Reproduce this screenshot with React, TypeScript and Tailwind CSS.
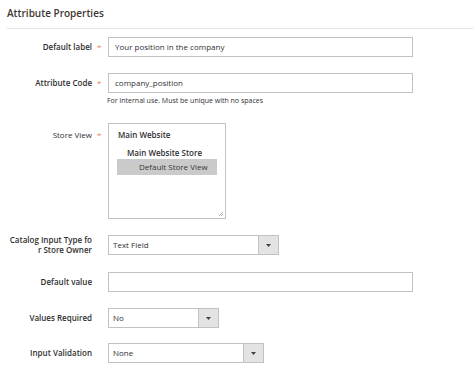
import React from "react";

const font = { fontFamily: '"Open Sans", "Liberation Sans", sans-serif' };

function Label({ text, required }: { text: React.ReactNode; required?: boolean }) {
  return (
    <>
      <div className="w-[85px] shrink-0 text-right text-[8px] font-semibold leading-[10px] text-[#303030]">
        {text}
      </div>
      <div className="w-[16px] shrink-0 pl-[5px] text-[8px] leading-[10px] text-[#e8805a]">
        {required ? "*" : ""}
      </div>
    </>
  );
}

function Select({ value, width }: { value: string; width: string }) {
  return (
    <div className={`flex h-[20px] ${width} border border-[#c2c2c2] bg-white`}>
      <div className="flex flex-1 items-center pl-[4px] text-[8px] text-[#303030]">{value}</div>
      <div className="flex w-[20px] items-center justify-center border-l border-[#c2c2c2] bg-[#e3e3e3]">
        <svg width="5" height="3" viewBox="0 0 5 3">
          <path d="M0 0h5L2.5 3z" fill="#414141" />
        </svg>
      </div>
    </div>
  );
}

export default function App() {
  return (
    <div className="h-[374px] w-[474px] bg-white pl-[7px] pr-[1px]" style={font}>
      <div className="pt-[6px] text-[10px] font-semibold leading-[15px] text-[#41362f]">
        Attribute Properties
      </div>
      <div className="mt-[7px] border-b border-[#e3e3e3]" />

      <div className="mt-[8px] flex items-center">
        <Label text="Default label" required />
        <div className="flex h-[20px] w-[305px] items-center border border-[#c2c2c2] pl-[6px] text-[8px] text-[#303030]">
          Your position in the company
        </div>
      </div>

      <div className="mt-[16px] flex items-center">
        <Label text="Attribute Code" required />
        <div className="flex h-[20px] w-[305px] items-center border border-[#c2c2c2] pl-[6px] text-[8px] text-[#303030]">
          company_position
        </div>
      </div>
      <div className="ml-[100px] mt-[3px] text-[7px] leading-[10px] text-[#303030]">
        For internal use. Must be unique with no spaces
      </div>

      <div className="mt-[17px] flex items-start">
        <div className="flex pt-[7px]">
          <Label text={<span className="font-normal">Store View</span>} required />
        </div>
        <div className="relative h-[96px] w-[118px] border border-[#c2c2c2] px-[8px] pt-[6px] text-[8px] leading-[10px] text-[#303030]">
          <div className="pl-[1px] font-semibold">Main Website</div>
          <div className="mt-[8px] pl-[10px] font-semibold">Main Website Store</div>
          <div className="mt-[1px] flex h-[16px] items-center bg-[#cacaca] pl-[22px] text-[#41362f]">
            Default Store View
          </div>
          <svg className="absolute bottom-[2px] right-[2px]" width="5" height="5" viewBox="0 0 5 5">
            <path d="M1 5L5 1M3 5L5 3" stroke="#999" strokeWidth="0.7" />
          </svg>
        </div>
      </div>

      <div className="mt-[16px] flex items-center">
        <Label text={<>Catalog Input Type fo<br />r Store Owner</>} />
        <Select value="Text Field" width="w-[171px]" />
      </div>

      <div className="mt-[17px] flex items-center">
        <Label text="Default value" />
        <div className="h-[20px] w-[305px] border border-[#c2c2c2]" />
      </div>

      <div className="mt-[16px] flex items-center">
        <Label text="Values Required" />
        <Select value="No" width="w-[111px]" />
      </div>

      <div className="mt-[15px] flex items-center">
        <Label text="Input Validation" />
        <Select value="None" width="w-[156px]" />
      </div>
    </div>
  );
}
